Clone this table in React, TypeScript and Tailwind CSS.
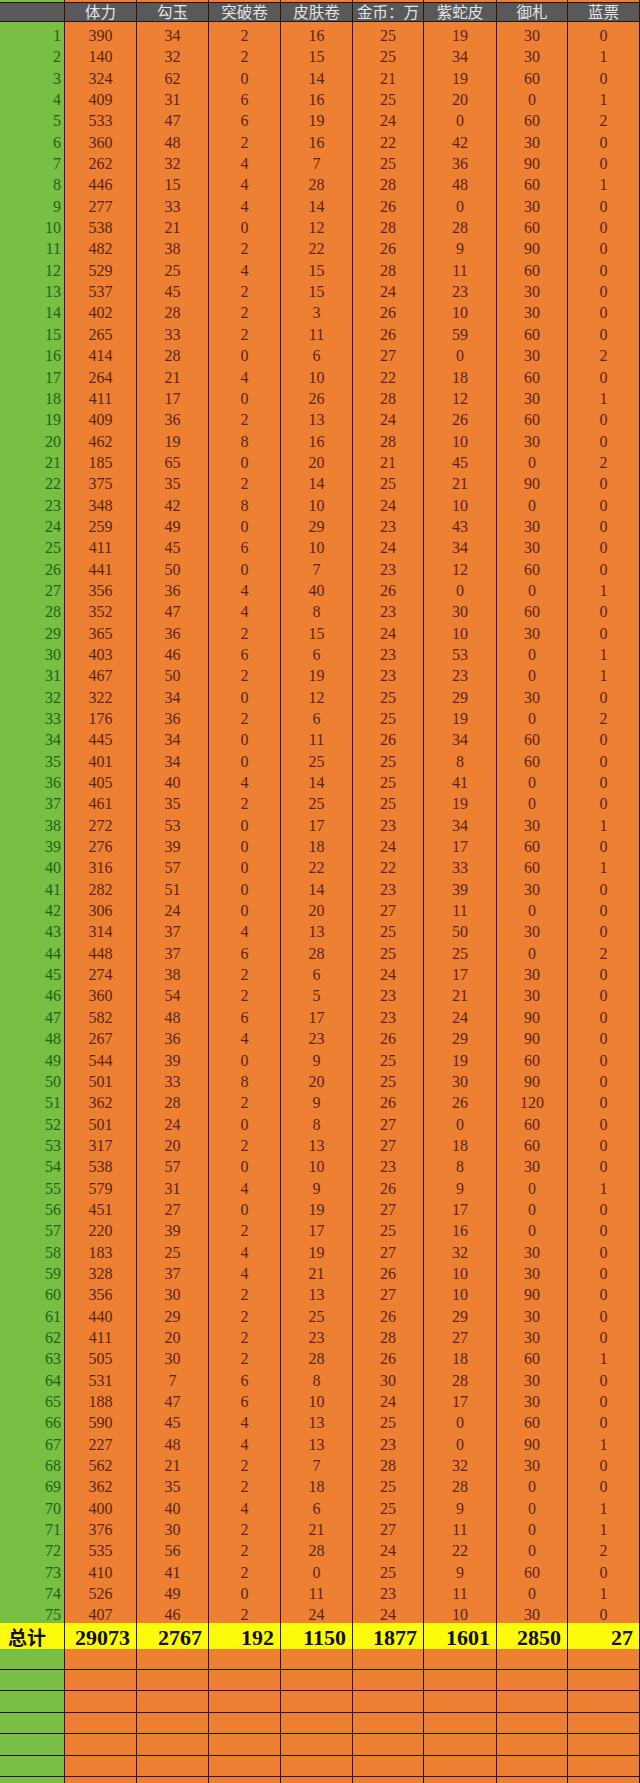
import React from 'react';

const headers = ['体力', '勾玉', '突破卷', '皮肤卷', '金币：万', '紫蛇皮', '御札', '蓝票'];

const rows: number[][] = [
  [390, 34, 2, 16, 25, 19, 30, 0],
  [140, 32, 2, 15, 25, 34, 30, 1],
  [324, 62, 0, 14, 21, 19, 60, 0],
  [409, 31, 6, 16, 25, 20, 0, 1],
  [533, 47, 6, 19, 24, 0, 60, 2],
  [360, 48, 2, 16, 22, 42, 30, 0],
  [262, 32, 4, 7, 25, 36, 90, 0],
  [446, 15, 4, 28, 28, 48, 60, 1],
  [277, 33, 4, 14, 26, 0, 30, 0],
  [538, 21, 0, 12, 28, 28, 60, 0],
  [482, 38, 2, 22, 26, 9, 90, 0],
  [529, 25, 4, 15, 28, 11, 60, 0],
  [537, 45, 2, 15, 24, 23, 30, 0],
  [402, 28, 2, 3, 26, 10, 30, 0],
  [265, 33, 2, 11, 26, 59, 60, 0],
  [414, 28, 0, 6, 27, 0, 30, 2],
  [264, 21, 4, 10, 22, 18, 60, 0],
  [411, 17, 0, 26, 28, 12, 30, 1],
  [409, 36, 2, 13, 24, 26, 60, 0],
  [462, 19, 8, 16, 28, 10, 30, 0],
  [185, 65, 0, 20, 21, 45, 0, 2],
  [375, 35, 2, 14, 25, 21, 90, 0],
  [348, 42, 8, 10, 24, 10, 0, 0],
  [259, 49, 0, 29, 23, 43, 30, 0],
  [411, 45, 6, 10, 24, 34, 30, 0],
  [441, 50, 0, 7, 23, 12, 60, 0],
  [356, 36, 4, 40, 26, 0, 0, 1],
  [352, 47, 4, 8, 23, 30, 60, 0],
  [365, 36, 2, 15, 24, 10, 30, 0],
  [403, 46, 6, 6, 23, 53, 0, 1],
  [467, 50, 2, 19, 23, 23, 0, 1],
  [322, 34, 0, 12, 25, 29, 30, 0],
  [176, 36, 2, 6, 25, 19, 0, 2],
  [445, 34, 0, 11, 26, 34, 60, 0],
  [401, 34, 0, 25, 25, 8, 60, 0],
  [405, 40, 4, 14, 25, 41, 0, 0],
  [461, 35, 2, 25, 25, 19, 0, 0],
  [272, 53, 0, 17, 23, 34, 30, 1],
  [276, 39, 0, 18, 24, 17, 60, 0],
  [316, 57, 0, 22, 22, 33, 60, 1],
  [282, 51, 0, 14, 23, 39, 30, 0],
  [306, 24, 0, 20, 27, 11, 0, 0],
  [314, 37, 4, 13, 25, 50, 30, 0],
  [448, 37, 6, 28, 25, 25, 0, 2],
  [274, 38, 2, 6, 24, 17, 30, 0],
  [360, 54, 2, 5, 23, 21, 30, 0],
  [582, 48, 6, 17, 23, 24, 90, 0],
  [267, 36, 4, 23, 26, 29, 90, 0],
  [544, 39, 0, 9, 25, 19, 60, 0],
  [501, 33, 8, 20, 25, 30, 90, 0],
  [362, 28, 2, 9, 26, 26, 120, 0],
  [501, 24, 0, 8, 27, 0, 60, 0],
  [317, 20, 2, 13, 27, 18, 60, 0],
  [538, 57, 0, 10, 23, 8, 30, 0],
  [579, 31, 4, 9, 26, 9, 0, 1],
  [451, 27, 0, 19, 27, 17, 0, 0],
  [220, 39, 2, 17, 25, 16, 0, 0],
  [183, 25, 4, 19, 27, 32, 30, 0],
  [328, 37, 4, 21, 26, 10, 30, 0],
  [356, 30, 2, 13, 27, 10, 90, 0],
  [440, 29, 2, 25, 26, 29, 30, 0],
  [411, 20, 2, 23, 28, 27, 30, 0],
  [505, 30, 2, 28, 26, 18, 60, 1],
  [531, 7, 6, 8, 30, 28, 30, 0],
  [188, 47, 6, 10, 24, 17, 30, 0],
  [590, 45, 4, 13, 25, 0, 60, 0],
  [227, 48, 4, 13, 23, 0, 90, 1],
  [562, 21, 2, 7, 28, 32, 30, 0],
  [362, 35, 2, 18, 25, 28, 0, 0],
  [400, 40, 4, 6, 25, 9, 0, 1],
  [376, 30, 2, 21, 27, 11, 0, 1],
  [535, 56, 2, 28, 24, 22, 0, 2],
  [410, 41, 2, 0, 25, 9, 60, 0],
  [526, 49, 0, 11, 23, 11, 0, 1],
  [407, 46, 2, 24, 24, 10, 30, 0],
];

const totals = [29073, 2767, 192, 1150, 1877, 1601, 2850, 27];

// column template shared by every row
const gridCols = 'grid grid-cols-[65px_72px_72px_72px_72px_71px_73px_71px_72px]';
const line = 'border-r border-b border-[#2a140a]';
const serif = "font-['Liberation_Serif','Times_New_Roman',serif]";
const cjk = "font-['Noto_Sans_CJK_SC','Noto_Sans',sans-serif]";

const App: React.FC = () => {
  return (
    <div className="w-[640px] h-[1783px] overflow-hidden bg-[#ee8033]">
      {/* thin strip of the row above the header */}
      <div className={`${gridCols} h-[3px]`}>
        <div className={`${line} bg-[#79bf43]`} />
        {headers.map((h) => (
          <div key={h} className={`${line} bg-[#ee8033]`} />
        ))}
      </div>

      <div className={`${gridCols} h-[19px]`}>
        <div className={`${line} bg-[#595959]`} />
        {headers.map((h) => (
          <div
            key={h}
            className={`${line} bg-[#595959] flex items-center justify-center ${cjk} text-[15.5px] leading-none text-[#e4e4e4] whitespace-nowrap`}
          >
            {h}
          </div>
        ))}
      </div>

      {rows.map((r, i) => (
        <div key={i} className={`${gridCols} h-[21.35px]`}>
          <div
            className={`${line} bg-[#79bf43] flex items-center justify-end pr-[3px] pt-[2px] ${serif} text-[16px] text-[#24601a]`}
          >
            {i + 1}
          </div>
          {r.map((v, j) => (
            <div
              key={j}
              className={`${line} bg-[#ee8033] flex items-center justify-center pt-[2px] ${serif} text-[16px] text-[#5c2410]`}
            >
              {v}
            </div>
          ))}
        </div>
      ))}

      <div className={`${gridCols} h-[26px]`}>
        <div
          className={`${line} bg-[#fbfb0a] flex items-center pl-[8px] ${cjk} font-bold text-[19px] text-[#111]`}
        >
          总计
        </div>
        {totals.map((v, j) => (
          <div
            key={j}
            className={`${line} bg-[#fbfb0a] flex items-center justify-end pr-[6px] pt-[2px] ${serif} font-bold text-[22px] leading-none text-[#111]`}
          >
            {v}
          </div>
        ))}
      </div>

      {Array.from({ length: 7 }).map((_, i) => (
        <div key={i} className={`${gridCols} h-[21.35px]`}>
          <div className={`${line} bg-[#79bf43]`} />
          {headers.map((h) => (
            <div key={h} className={`${line} bg-[#ee8033]`} />
          ))}
        </div>
      ))}
    </div>
  );
};

export default App;
